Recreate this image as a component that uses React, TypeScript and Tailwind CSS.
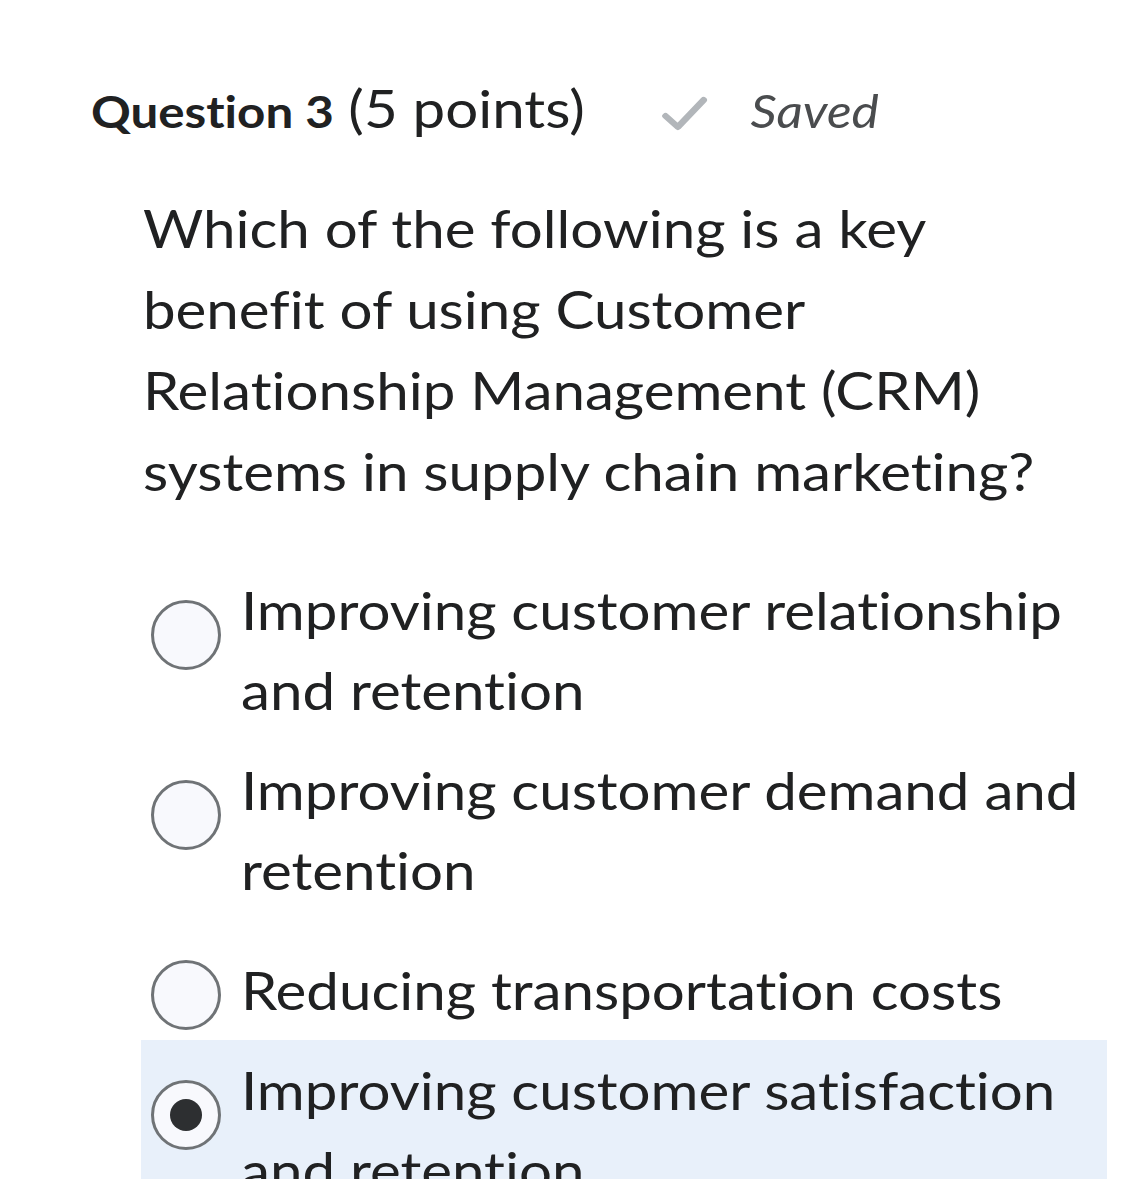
import React from "react";

function Radio({ checked }: { checked?: boolean }) {
  return (
    <div className="w-[70px] h-[70px] shrink-0 rounded-full border-[3px] border-[#6f7376] bg-[#f8f9fd] flex items-center justify-center">
      {checked && <div className="w-[32px] h-[32px] rounded-full bg-[#2d2f31]" />}
    </div>
  );
}

function OptText({ children }: { children: React.ReactNode }) {
  return (
    <div className="text-[52px] leading-[80px] whitespace-nowrap origin-left scale-x-[1.12]">{children}</div>
  );
}

export default function App() {
  const font = { fontFamily: "Lato, 'Noto Sans', sans-serif" };
  return (
    <div className="w-[1143px] h-[1179px] bg-white overflow-hidden text-[#202122] [font-variant-ligatures:none]" style={font}>
      <div className="pl-[91px] pt-[78px]">
        <div className="flex items-baseline origin-left scale-x-[1.12] whitespace-nowrap">
          <span className="font-bold text-[44px] leading-[60px]">Question 3</span>
          <span className="text-[52px] leading-[60px] ml-[13px]">(5 points)</span>
          <svg className="ml-[68px] self-center mt-[8px]" width="42" height="36" viewBox="0 0 42 36">
            <path d="M4 20 L15 31 L38 4" fill="none" stroke="#b2b6ba" strokeWidth="6" strokeLinecap="round" strokeLinejoin="round" />
          </svg>
          <span className="italic text-[46px] leading-[60px] ml-[38px] text-[#4a4c4e]">Saved</span>
        </div>
      </div>
      <div className="pl-[143px] pt-[47px]">
        <div className="text-[52px] leading-[81px] whitespace-nowrap origin-left scale-x-[1.12]">
          Which of the following is a key<br />benefit of using Customer<br />Relationship Management (CRM)<br />systems in supply chain marketing?
        </div>
      </div>
      <div className="ml-[141px] mr-[36px] mt-[58px] flex flex-col">
        <div className="flex items-start pl-[10px] gap-[20px]">
          <div className="mt-[30px]"><Radio /></div>
          <OptText>Improving customer relationship<br />and retention</OptText>
        </div>
        <div className="flex items-start pl-[10px] gap-[20px] mt-[20px]">
          <div className="mt-[30px]"><Radio /></div>
          <OptText>Improving customer demand and<br />retention</OptText>
        </div>
        <div className="flex items-start pl-[10px] gap-[20px] mt-[40px]">
          <div className="mt-[10px]"><Radio /></div>
          <OptText>Reducing transportation costs</OptText>
        </div>
        <div className="flex items-start pl-[10px] gap-[20px] mt-[10px] pt-[10px] bg-[#e8f0fa]">
          <div className="mt-[30px]"><Radio checked /></div>
          <OptText>Improving customer satisfaction<br />and retention</OptText>
        </div>
      </div>
    </div>
  );
}
